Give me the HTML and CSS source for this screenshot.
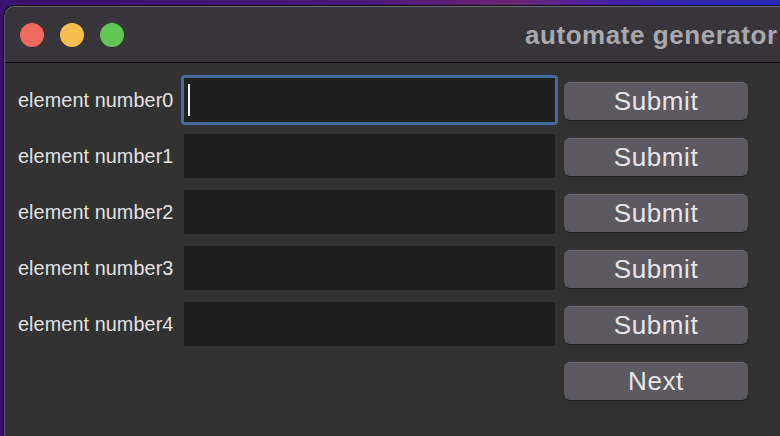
FILE: index.html
```html
<!DOCTYPE html>
<html>
<head>
<meta charset="utf-8">
<link rel="stylesheet" href="styles.css">
</head>
<body>
<div class="window">
  <div class="frame">
    <div class="titlebar">
      <span class="light red"></span>
      <span class="light yellow"></span>
      <span class="light green"></span>
      <span class="title">automate generator</span>
    </div>
    <div class="content">
      <div class="row">
        <div class="label">element number0</div>
        <div class="field focused"><div class="input"><span class="caret"></span></div></div>
        <button class="btn">Submit</button>
      </div>
      <div class="row">
        <div class="label">element number1</div>
        <div class="field"><div class="input"></div></div>
        <button class="btn">Submit</button>
      </div>
      <div class="row">
        <div class="label">element number2</div>
        <div class="field"><div class="input"></div></div>
        <button class="btn">Submit</button>
      </div>
      <div class="row">
        <div class="label">element number3</div>
        <div class="field"><div class="input"></div></div>
        <button class="btn">Submit</button>
      </div>
      <div class="row">
        <div class="label">element number4</div>
        <div class="field"><div class="input"></div></div>
        <button class="btn">Submit</button>
      </div>
      <div class="row">
        <div class="label"></div>
        <div class="field empty"></div>
        <button class="btn">Next</button>
      </div>
    </div>
  </div>
</div>
</body>
</html>
```
FILE: styles.css
```css
html, body {
  margin: 0;
  padding: 0;
  width: 780px;
  height: 436px;
  overflow: hidden;
}
body {
  background: linear-gradient(90deg, #38136c 0%, #46197a 45%, #5a1d78 55%, #6c2272 66%, #4a22a0 76%, #3326b4 88%, #2c2ab8 100%);
  font-family: "Liberation Sans", Arial, sans-serif;
}
.window {
  margin: 5px 0 0 3px;
  width: 777px;
  height: 431px;
  box-sizing: border-box;
  border: 1px solid #121212;
  border-right: none;
  border-bottom: none;
  border-top-left-radius: 11px;
  overflow: hidden;
}
.frame {
  border-top: 1px solid #6a696d;
  border-left: 1px solid #5c5b5f;
  border-top-left-radius: 10px;
  height: 100%;
  box-sizing: border-box;
  background: #323232;
  overflow: hidden;
}
.titlebar {
  height: 55px;
  background: #37353a;
  border-bottom: 1px solid #0f0f10;
  display: flex;
  align-items: center;
  padding-left: 15px;
  gap: 16px;
  overflow: hidden;
}
.light {
  width: 24px;
  height: 24px;
  border-radius: 50%;
  flex: none;
  margin-top: 1px;
}
.red { background: #ee6a5e; }
.yellow { background: #f5be4f; }
.green { background: #61c554; }
.title {
  margin-left: 385px;
  color: #a9a8ac;
  font-size: 26px;
  font-weight: bold;
  letter-spacing: 0.55px;
  white-space: nowrap;
  margin-top: 1px;
}
.content {
  padding: 12px 0 0 13px;
  display: flex;
  flex-direction: column;
  gap: 6px;
}
.row {
  display: grid;
  grid-template-columns: 157px 377px 184px;
  column-gap: 6px;
  align-items: center;
  height: 50px;
}
.label {
  color: #e2e2e2;
  font-size: 19.8px;
  letter-spacing: 0.1px;
  white-space: nowrap;
  padding-top: 1px;
}
.field {
  height: 50px;
  padding: 3px;
  box-sizing: border-box;
}
.field.focused {
  padding: 0;
  border: 3px solid #496a9a;
  border-radius: 4px;
}
.input {
  height: 44px;
  background: #1f1f1f;
  display: flex;
  align-items: flex-start;
}
.caret {
  width: 2px;
  height: 32px;
  background: #f4f4f4;
  margin: 6px 0 0 4px;
}
.btn {
  height: 38px;
  margin-top: 2px;
  background: #5c5a60;
  border: none;
  border-top: 1px solid #6f6d73;
  border-radius: 6px;
  box-shadow: 0 1px 1px #1e1e1e;
  color: #e6e6e6;
  font-family: "Liberation Sans", Arial, sans-serif;
  font-size: 26px;
  letter-spacing: 0.6px;
  padding: 0;
  line-height: 35px;
}
```
